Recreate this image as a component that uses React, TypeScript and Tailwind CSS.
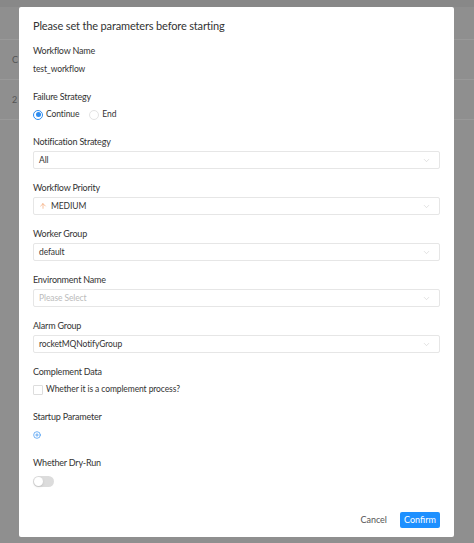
import { ChevronDown, ArrowUp, PlusCircle } from 'lucide-react';

const font = { fontFamily: 'Lato, "Open Sans", sans-serif' };

function Label({ children }: { children: React.ReactNode }) {
  return <div className="h-[18px] flex items-center text-[9px] tracking-[-0.2px] text-[#333]">{children}</div>;
}

function Select({ value, placeholder, icon }: { value?: string; placeholder?: string; icon?: React.ReactNode }) {
  return (
    <div className="h-[18px] flex items-center border border-[#e6e6e6] rounded-[2px] pl-[5px] pr-[8px]">
      {icon}
      <span className={`flex-1 text-[8.5px] tracking-[-0.1px] ${value ? 'text-[#333]' : 'text-[#bbb]'}`}>{value ?? placeholder}</span>
      <ChevronDown className="w-[9px] h-[9px] text-[#ccc]" strokeWidth={1.5} />
    </div>
  );
}

export default function App() {
  return (
    <div className="relative h-[543px] w-[474px] overflow-hidden bg-[#8f8f8f]" style={font}>
      {/* page behind the mask */}
      <div className="flex flex-col text-[9px] text-[#555]">
        <div className="h-[7px] bg-[#888]" />
        <div className="h-[33px] border-b border-[#999]" />
        <div className="h-[40px] border-b border-[#999] flex items-center pl-[12px]">C</div>
        <div className="h-[40px] border-b border-[#999] flex items-center pl-[12px]">2</div>
      </div>

      {/* modal */}
      <div className="absolute left-[19px] top-[7px] w-[435px] h-[530px] bg-white rounded-[2px] flex flex-col px-[14px] pt-[9px] pb-[9px]">
        <div className="h-[20px] flex items-center text-[11px] tracking-[-0.15px] text-[#333]">Please set the parameters before starting</div>

        <div className="flex flex-col gap-[10px] mt-[6px]">
          <div>
            <Label>Workflow Name</Label>
            <div className="h-[18px] flex items-center text-[8.5px] tracking-[-0.1px] text-[#333]">test_workflow</div>
          </div>

          <div>
            <Label>Failure Strategy</Label>
            <div className="h-[17px] flex items-center gap-[10px] text-[8.5px] tracking-[-0.1px] text-[#333]">
              <label className="flex items-center gap-[3px]">
                <span className="w-[10px] h-[10px] rounded-full border border-[#2d8cf0] flex items-center justify-center">
                  <span className="w-[5px] h-[5px] rounded-full bg-[#2d8cf0]" />
                </span>
                Continue
              </label>
              <label className="flex items-center gap-[3px]">
                <span className="w-[10px] h-[10px] rounded-full border border-[#e3e3e3]" />
                End
              </label>
            </div>
          </div>

          <div>
            <Label>Notification Strategy</Label>
            <Select value="All" />
          </div>

          <div>
            <Label>Workflow Priority</Label>
            <Select
              value="MEDIUM"
              icon={<ArrowUp className="w-[8px] h-[8px] text-[#f5a06a] mr-[4px]" strokeWidth={2} />}
            />
          </div>

          <div>
            <Label>Worker Group</Label>
            <Select value="default" />
          </div>

          <div>
            <Label>Environment Name</Label>
            <Select placeholder="Please Select" />
          </div>

          <div>
            <Label>Alarm Group</Label>
            <Select value="rocketMQNotifyGroup" />
          </div>

          <div>
            <Label>Complement Data</Label>
            <div className="h-[17px] flex items-center gap-[3px] text-[8.5px] tracking-[-0.1px] text-[#333]">
              <span className="w-[10px] h-[10px] border border-[#ddd] rounded-[1px]" />
              Whether it is a complement process?
            </div>
          </div>

          <div>
            <Label>Startup Parameter</Label>
            <div className="h-[18px] flex items-center">
              <PlusCircle className="w-[8px] h-[8px] text-[#2d8cf0]" strokeWidth={2} />
            </div>
          </div>

          <div>
            <Label>Whether Dry-Run</Label>
            <div className="h-[18px] flex items-center">
              <span className="w-[21px] h-[11px] rounded-full bg-[#dcdcdc] flex items-center px-[1px]">
                <span className="w-[9px] h-[9px] rounded-full bg-white shadow-sm" />
              </span>
            </div>
          </div>
        </div>

        <div className="mt-auto flex items-center justify-end gap-[11px]">
          <button className="h-[16px] px-[2px] text-[9px] text-[#555]">Cancel</button>
          <button className="h-[16px] w-[40px] rounded-[2px] bg-[#1e90ff] text-white text-[9px]">Confirm</button>
        </div>
      </div>
    </div>
  );
}
